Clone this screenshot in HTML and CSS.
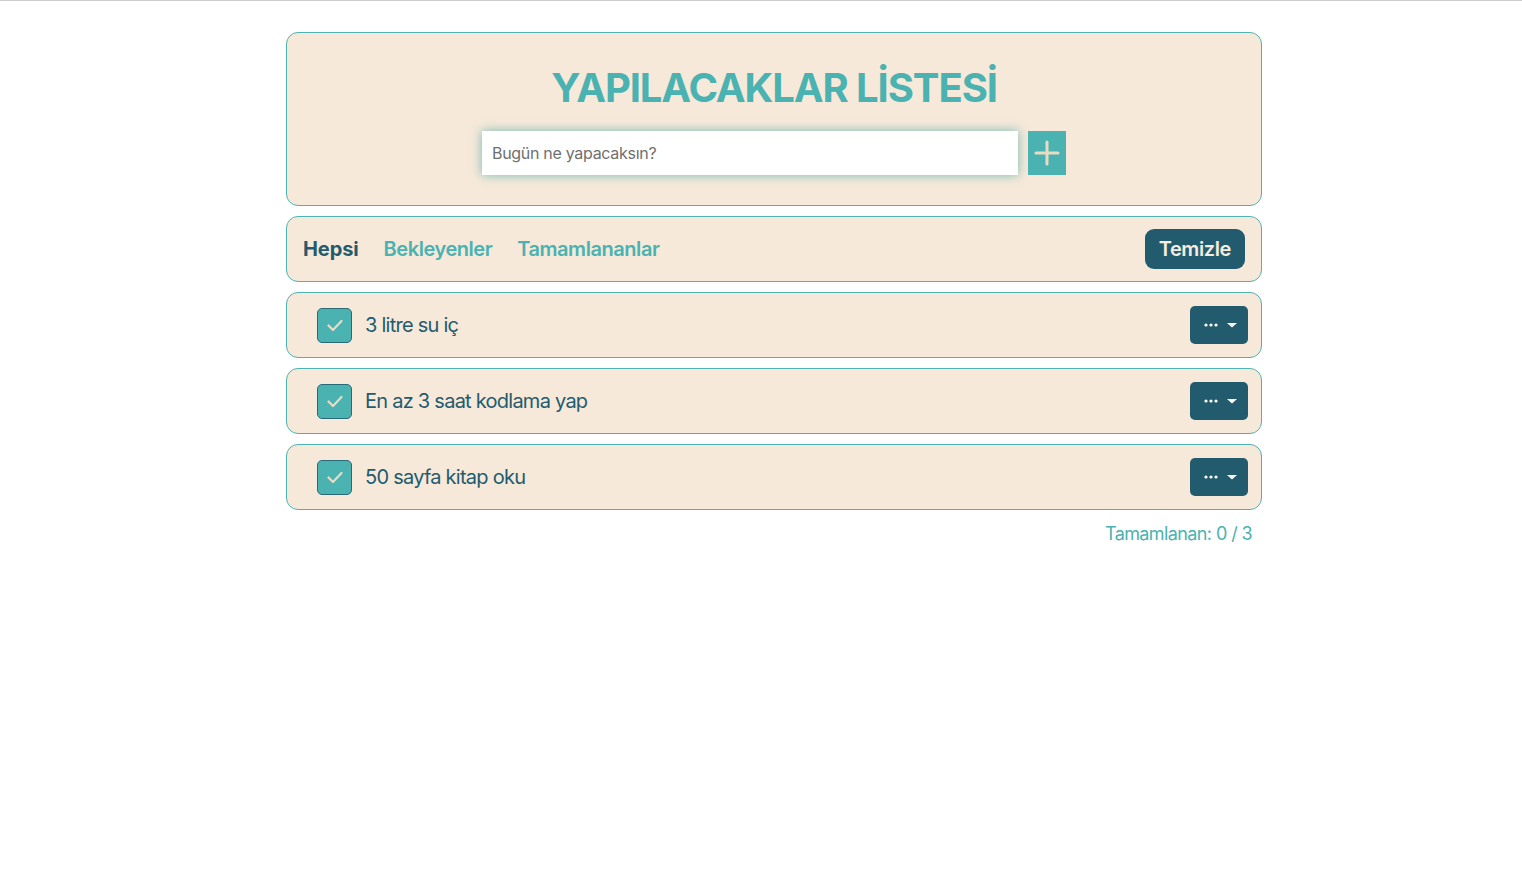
FILE: index.html
```html
<!DOCTYPE html>
<html lang="tr">
<head>
<meta charset="utf-8">
<title>Yapılacaklar Listesi</title>
<link rel="stylesheet" href="styles.css">
</head>
<body>
<main class="app">
  <section class="card header">
    <h1 class="title">YAPILACAKLAR LİSTESİ</h1>
    <form class="add-form">
      <input class="add-input" type="text" placeholder="Bugün ne yapacaksın?">
      <button class="add-btn" type="button" aria-label="Ekle">
        <svg width="26" height="26" viewBox="0 0 26 26"><path d="M13 2v22M2 13h22" stroke="#e9dcc4" stroke-width="3" stroke-linecap="round" fill="none"/></svg>
      </button>
    </form>
  </section>

  <section class="card filters">
    <nav class="filter-links">
      <a class="filter active">Hepsi</a>
      <a class="filter">Bekleyenler</a>
      <a class="filter">Tamamlananlar</a>
    </nav>
    <button class="clear-btn" type="button">Temizle</button>
  </section>

  <ul class="todo-list">
    <li class="card todo">
      <span class="check"><svg width="20" height="20" viewBox="0 0 20 20"><path d="M3.5 10.5l4.5 4.5 8.5-9" stroke="#e9dcc4" stroke-width="2.2" stroke-linecap="round" stroke-linejoin="round" fill="none"/></svg></span>
      <span class="todo-text">3 litre su iç</span>
      <button class="menu-btn" type="button"><svg width="34" height="10" viewBox="0 0 34 10"><circle cx="3" cy="5" r="1.6" fill="#fff"/><circle cx="8" cy="5" r="1.6" fill="#fff"/><circle cx="13" cy="5" r="1.6" fill="#fff"/><path d="M24 3h10l-5 4.5z" fill="#fff"/></svg></button>
    </li>
    <li class="card todo">
      <span class="check"><svg width="20" height="20" viewBox="0 0 20 20"><path d="M3.5 10.5l4.5 4.5 8.5-9" stroke="#e9dcc4" stroke-width="2.2" stroke-linecap="round" stroke-linejoin="round" fill="none"/></svg></span>
      <span class="todo-text">En az 3 saat kodlama yap</span>
      <button class="menu-btn" type="button"><svg width="34" height="10" viewBox="0 0 34 10"><circle cx="3" cy="5" r="1.6" fill="#fff"/><circle cx="8" cy="5" r="1.6" fill="#fff"/><circle cx="13" cy="5" r="1.6" fill="#fff"/><path d="M24 3h10l-5 4.5z" fill="#fff"/></svg></button>
    </li>
    <li class="card todo">
      <span class="check"><svg width="20" height="20" viewBox="0 0 20 20"><path d="M3.5 10.5l4.5 4.5 8.5-9" stroke="#e9dcc4" stroke-width="2.2" stroke-linecap="round" stroke-linejoin="round" fill="none"/></svg></span>
      <span class="todo-text">50 sayfa kitap oku</span>
      <button class="menu-btn" type="button"><svg width="34" height="10" viewBox="0 0 34 10"><circle cx="3" cy="5" r="1.6" fill="#fff"/><circle cx="8" cy="5" r="1.6" fill="#fff"/><circle cx="13" cy="5" r="1.6" fill="#fff"/><path d="M24 3h10l-5 4.5z" fill="#fff"/></svg></button>
    </li>
  </ul>

  <p class="summary">Tamamlanan: 0 / 3</p>
</main>
</body>
</html>
```
FILE: styles.css
```css
* { box-sizing: border-box; }

html, body {
  margin: 0;
  padding: 0;
  background: #ffffff;
}

body {
  border-top: 1px solid #cccccc;
  font-family: Inter, "Noto Sans", "Liberation Sans", sans-serif;
  color: #235b6e;
}

.app {
  width: 976px;
  margin: 31px 0 0 286px;
  display: flex;
  flex-direction: column;
  gap: 10px;
}

.card {
  background: #f6e9da;
  border: 1px solid #4db3b0;
  border-radius: 12px;
}

.header {
  padding: 31px 0 30px;
  display: flex;
  flex-direction: column;
  align-items: center;
}

.title {
  margin: 0 0 19px;
  font-size: 40px;
  line-height: 48px;
  font-weight: 700;
  color: #4ab2b0;
  letter-spacing: -1.1px;
}

.add-form {
  display: flex;
  gap: 10px;
  margin: 0;
}

.add-input {
  width: 536px;
  height: 44px;
  border: none;
  outline: none;
  padding: 0 10px;
  font-family: inherit;
  font-size: 16px;
  letter-spacing: -0.3px;
  color: #333;
  background: #ffffff;
  box-shadow: 0 0 10px rgba(74, 170, 165, 0.75);
}

.add-input::placeholder {
  color: #6f6f6f;
}

.add-btn {
  width: 38px;
  height: 44px;
  border: none;
  padding: 0;
  background: #4ab2b0;
  display: flex;
  align-items: center;
  justify-content: center;
}

.filters {
  height: 66px;
  padding: 0 16px;
  display: flex;
  align-items: center;
  justify-content: space-between;
}

.filter-links {
  display: flex;
  gap: 25px;
}

.filter {
  font-size: 20px;
  font-weight: 600;
  color: #4ab2b0;
  letter-spacing: -0.45px;
}

.filter.active {
  font-weight: 700;
  color: #235b6e;
  letter-spacing: -0.1px;
}

.clear-btn {
  height: 40px;
  padding: 0 14px;
  border: none;
  border-radius: 9px;
  background: #235b6e;
  color: #f6ece0;
  font-family: inherit;
  font-size: 20px;
  font-weight: 600;
  letter-spacing: -0.4px;
}

.todo-list {
  list-style: none;
  margin: 0;
  padding: 0;
  display: flex;
  flex-direction: column;
  gap: 10px;
}

.todo {
  height: 66px;
  padding: 0 13px 0 30px;
  display: flex;
  align-items: center;
}

.check {
  width: 35px;
  height: 35px;
  border: 1px solid #2a6a78;
  border-radius: 5px;
  background: #4ab2b0;
  display: flex;
  align-items: center;
  justify-content: center;
  flex: none;
}

.todo-text {
  margin-left: 13px;
  flex: 1;
  font-size: 20px;
  color: #235b6e;
  letter-spacing: -0.75px;
}

.menu-btn {
  width: 58px;
  height: 38px;
  border: none;
  border-radius: 5px;
  background: #235b6e;
  display: flex;
  align-items: center;
  justify-content: center;
  padding: 0 0 0 2px;
}

.summary {
  margin: 3px 0 0;
  padding-right: 10px;
  text-align: right;
  font-size: 18px;
  line-height: 22px;
  color: #4ab2b0;
  letter-spacing: -0.6px;
}
```
